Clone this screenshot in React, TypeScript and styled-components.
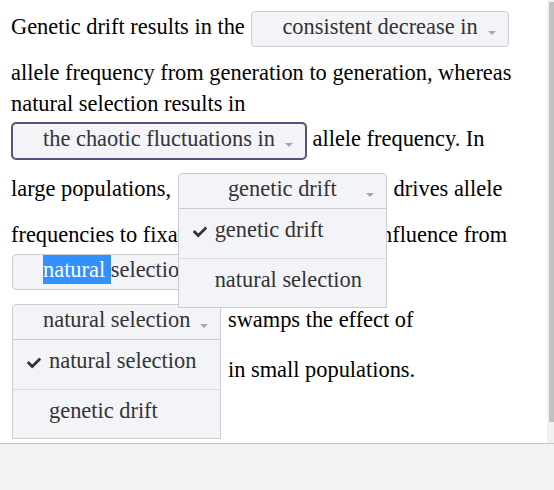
import React from 'react'
import styled, { createGlobalStyle, css } from 'styled-components'
import { FaCheck } from 'react-icons/fa'

const GlobalStyle = createGlobalStyle`
  html, body {
    margin: 0;
    padding: 0;
    background: #f2f2f2;
  }
`

const Frame = styled.div`
  display: flex;
  height: 443px;
  background: #fff;
  border-bottom: 1px solid #c6c6c6;
  box-shadow: 0 1px 0 #e0e0e0;
`

const Content = styled.div`
  flex: 1;
  min-width: 0;
  overflow: hidden;
`

const ScrollTrack = styled.div`
  display: flex;
  flex-direction: column;
  width: 7px;
  box-sizing: border-box;
  padding: 2px 0 0 2px;
  background: #f1f1f1;
`

const ScrollThumb = styled.div`
  height: 420px;
  background: #c1c1c1;
`

const Passage = styled.p`
  margin: 0;
  padding: 7px 21px 67px 11px;
  font-family: 'Liberation Serif', 'Times New Roman', serif;
  font-size: 22.4px;
  line-height: 31px;
  color: #000;
`

const SelectWrap = styled.span`
  position: relative;
  display: inline-block;
  margin: 4px 1px 10px;
  line-height: 29px;
`

const SelectBox = styled.span<{ $open?: boolean; $focused?: boolean }>`
  display: flex;
  align-items: center;
  height: 36px;
  box-sizing: border-box;
  padding: 0 12px 5px 30px;
  border: 1px solid #cccccc;
  border-radius: ${(p) => (p.$open ? '4px 4px 0 0' : '4px')};
  background: #f3f4f8;
  color: #333;
  cursor: pointer;

  ${(p) =>
    p.$focused &&
    css`
      border-color: #57517d;
      box-shadow: 0 0 0 1px #57517d;
    `}
`

// every option sits in the same cell, so the box is as wide as the longest one
const Label = styled.span`
  display: inline-grid;
  white-space: nowrap;
`

const LabelText = styled.span<{ $shown: boolean }>`
  grid-area: 1 / 1;
  text-align: center;
  visibility: ${(p) => (p.$shown ? 'visible' : 'hidden')};
`

const Highlight = styled.span`
  display: inline-block;
  white-space: pre;
  background: #3390ff;
  color: #fff;
`

const Caret = styled.span`
  align-self: flex-start;
  margin: 19px 0 0 10px;
  width: 0;
  height: 0;
  border-left: 4px solid transparent;
  border-right: 4px solid transparent;
  border-top: 4px solid #a8a8a8;
`

const Menu = styled.span`
  position: absolute;
  top: 100%;
  left: 0;
  right: 0;
  z-index: 2;
  display: block;
  background: #f3f4f8;
  border: 1px solid #cccccc;
  border-top: 0;
  color: #333;
`

const Option = styled.span`
  display: flex;
  align-items: center;
  height: 49px;
  box-sizing: border-box;
  padding: 0 0 9px 14px;
  white-space: nowrap;

  & + & {
    padding-bottom: 8px;
    border-top: 1px solid #dcdcdc;
  }
`

const CheckSlot = styled.span`
  display: flex;
  width: 14px;
  margin: 6px 8px 0 0;
  color: #333;
`

type SelectProps = {
  options: string[]
  value?: number
  open?: boolean
  focused?: boolean
  highlight?: string
}

const Select = ({ options, value = 0, open, focused, highlight }: SelectProps) => (
  <SelectWrap>
    <SelectBox $open={open} $focused={focused}>
      <Label>
        {options.map((o, i) => (
          <LabelText key={o} $shown={i === value}>
            {i === value && highlight && o.startsWith(highlight) ? (
              <>
                <Highlight>{highlight}</Highlight>
                {o.slice(highlight.length)}
              </>
            ) : (
              o
            )}
          </LabelText>
        ))}
      </Label>
      <Caret />
    </SelectBox>
    {open && (
      <Menu>
        {options.map((o, i) => (
          <Option key={o}>
            <CheckSlot>{i === value && <FaCheck size={14} />}</CheckSlot>
            {o}
          </Option>
        ))}
      </Menu>
    )}
  </SelectWrap>
)

const forces = ['genetic drift', 'natural selection']

export default function App() {
  return (
    <>
      <GlobalStyle />
      <Frame>
        <Content>
          <Passage>
            Genetic drift results in the{' '}
            <Select options={['consistent decrease in', 'random change in']} />{' '}
            allele frequency from generation to generation, whereas natural selection results in{' '}
            <Select options={['the chaotic fluctuations in', 'a steady shift in']} focused />{' '}
            allele frequency. In large populations, <Select options={forces} open /> drives allele
            frequencies to fixation with minor or no influence from{' '}
            <Select options={forces} value={1} highlight="natural " />. In contrast,{' '}
            <Select options={['natural selection', 'genetic drift']} open /> swamps the effect of{' '}
            <Select options={forces} /> in small populations.
          </Passage>
        </Content>
        <ScrollTrack>
          <ScrollThumb />
        </ScrollTrack>
      </Frame>
    </>
  )
}
